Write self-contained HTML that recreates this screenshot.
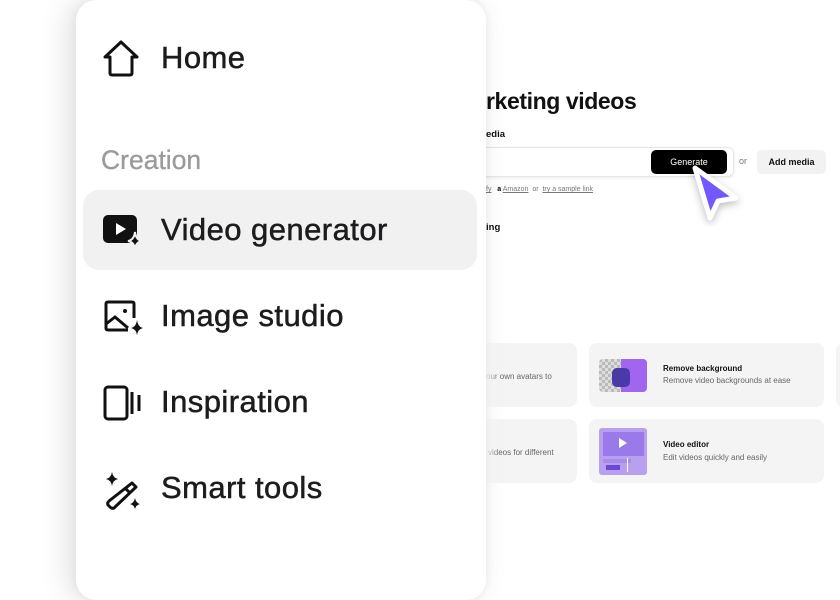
<!DOCTYPE html>
<html><head><meta charset="utf-8"><style>
*{margin:0;padding:0;box-sizing:border-box}
body{width:840px;height:560px;overflow:hidden;background:#fff;font-family:"Liberation Sans",sans-serif;position:relative;color:#111}
.a{position:absolute;white-space:nowrap}
.card{position:absolute;background:#f4f4f4;border-radius:8px}
.panel{position:absolute;left:76px;top:0;width:410px;height:600px;background:#fff;border-radius:20px;box-shadow:-8px 0 30px rgba(0,0,0,.12),0 0 10px rgba(0,0,0,.06);z-index:5}
.item{position:absolute;left:161px;font-size:31px;color:#1c1c1e;letter-spacing:0.45px;-webkit-text-stroke:0.5px #1c1c1e;z-index:6}
.z{z-index:6}
</style></head><body>
<!-- right page -->
<div class="a" style="left:486px;top:88px;font-size:23px;font-weight:bold;letter-spacing:-0.4px">rketing videos</div>
<div class="a" style="left:486px;top:129px;font-size:9.5px;font-weight:bold">edia</div>
<div class="a" style="left:486px;top:147px;width:248px;height:30px;border:1px solid #e6e6e6;border-left:none;border-radius:0 6px 6px 0;background:#fff;box-shadow:0 1px 3px rgba(0,0,0,.08)"></div>
<div class="a" style="left:651px;top:150px;width:76px;height:24px;background:#000;border-radius:5px;color:#fff;font-size:9px;text-align:center;line-height:24px">Generate</div>
<div class="a" style="left:739px;top:156px;font-size:9px;color:#777">or</div>
<div class="a" style="left:757px;top:150px;width:69px;height:24px;background:#f2f2f2;border-radius:5px;font-size:9px;text-align:center;line-height:24px;font-weight:bold">Add media</div>
<div class="a" style="left:486px;top:186px;font-size:7px;color:#777"><u>fy</u> &nbsp; <b style="color:#000">a</b> <u>Amazon</u> &nbsp;or&nbsp; <u>try a sample link</u></div>
<div class="a" style="left:486px;top:222px;font-size:9.5px;font-weight:bold">ing</div>
<div class="card" style="left:486px;top:343px;width:91px;height:64px;border-radius:0 8px 8px 0"></div>
<div class="a" style="left:486px;top:372px;font-size:8px;color:#666">our own avatars to</div>
<div class="card" style="left:589px;top:343px;width:235px;height:64px"></div>
<div class="a" style="left:599px;top:359px;width:48px;height:33px;border-radius:4px;background:repeating-conic-gradient(#ddd 0 25%,#bbb 0 50%) 0 0/6px 6px"></div>
<div class="a" style="left:621px;top:359px;width:26px;height:33px;border-radius:0 4px 4px 0;background:#a066f0"></div>
<div class="a" style="left:612px;top:368px;width:18px;height:19px;border-radius:5px;background:#4a3aa8"></div>
<div class="a" style="left:663px;top:364px;font-size:8px;font-weight:bold">Remove background</div>
<div class="a" style="left:663px;top:376px;font-size:8px;color:#666">Remove video backgrounds at ease</div>
<div class="card" style="left:836px;top:343px;width:20px;height:64px"></div>
<div class="card" style="left:486px;top:419px;width:91px;height:64px;border-radius:0 8px 8px 0"></div>
<div class="a" style="left:488px;top:448px;font-size:8px;color:#666">videos for different</div>
<div class="card" style="left:589px;top:419px;width:235px;height:64px"></div>
<div class="a" style="left:599px;top:428px;width:48px;height:47px;border-radius:3px;background:#b8a0f0"></div>
<div class="a" style="left:603px;top:432px;width:41px;height:24px;background:#9a7ae8"></div>
<div class="a" style="left:619px;top:438px;width:0;height:0;border-left:8px solid #fff;border-top:5px solid transparent;border-bottom:5px solid transparent"></div>
<div class="a" style="left:603px;top:459px;width:28px;height:4px;background:#a88ce8"></div>
<div class="a" style="left:606px;top:465px;width:14px;height:5px;background:#6a48d8"></div>
<div class="a" style="left:627px;top:458px;width:1px;height:14px;background:#fff"></div>
<div class="a" style="left:663px;top:440px;font-size:8px;font-weight:bold">Video editor</div>
<div class="a" style="left:663px;top:453px;font-size:8px;color:#666">Edit videos quickly and easily</div>
<div class="a" style="left:486px;top:335px;width:14px;height:160px;background:linear-gradient(90deg,rgba(255,255,255,.85),rgba(255,255,255,0))"></div>
<!-- cursor -->
<svg class="a" style="left:686px;top:160px" width="60" height="66" viewBox="0 0 60 66"><path d="M9 8 L50 38 L32 41 L24 58 Z" fill="#7357ff" stroke="#fff" stroke-width="5" stroke-linejoin="round" style="filter:drop-shadow(0 3px 4px rgba(0,0,0,.25))"/></svg>
<!-- panel -->
<div class="panel"></div>
<svg class="a z" style="left:102px;top:39px" width="38" height="38" viewBox="0 0 38 38" fill="none" stroke="#111" stroke-width="3" stroke-linejoin="round"><path d="M19 3 L35 18 L30 18 L30 34 Q30 36 28 36 L10 36 Q8 36 8 34 L8 18 L3 18 Z"/></svg>
<div class="item" style="top:40px">Home</div>
<div class="a z" style="left:101px;top:145px;font-size:26.5px;color:#9a9a9a;-webkit-text-stroke:0.3px #9a9a9a">Creation</div>
<div class="a z" style="left:83px;top:190px;width:394px;height:80px;background:#f1f1f1;border-radius:16px"></div>
<svg class="a z" style="left:102px;top:213px" width="42" height="36" viewBox="0 0 42 36"><rect x="1" y="2" width="34" height="28" rx="5" fill="#111"/><path d="M14 10 L24 16 L14 22 Z" fill="#fff"/><path d="M33 19 Q34 27 40 28 Q34 29 33 36 Q32 29 26 28 Q32 27 33 19Z" fill="#111" stroke="#f1f1f1" stroke-width="2"/></svg>
<div class="item" style="top:212px">Video generator</div>
<svg class="a z" style="left:102px;top:298px" width="42" height="38" viewBox="0 0 42 38" fill="none" stroke="#111" stroke-width="3"><path d="M26 32 L6 32 Q4 32 4 30 L4 6 Q4 4 6 4 L30 4 Q32 4 32 6 L32 20"/><path d="M4 26 L13 19 L26 30"/><circle cx="23" cy="13" r="2" fill="#111" stroke="none"/><path d="M35 22 Q36 29 41 30 Q36 31 35 37 Q34 31 29 30 Q34 29 35 22Z" fill="#111" stroke="none"/></svg>
<div class="item" style="top:298px">Image studio</div>
<svg class="a z" style="left:102px;top:384px" width="40" height="38" viewBox="0 0 40 38" fill="none" stroke="#111" stroke-width="3"><rect x="3" y="3" width="22" height="32" rx="3"/><path d="M30 8 L30 30 M37 11 L37 27"/></svg>
<div class="item" style="top:384px">Inspiration</div>
<svg class="a z" style="left:102px;top:470px" width="40" height="40" viewBox="0 0 40 40" fill="none" stroke="#111" stroke-width="3" stroke-linejoin="round"><path d="M30 13 L34 17 L12 38 Q10 39 8 37 L6 35 Q5 33 7 31 Z M24 19 L28 23"/><path d="M10 2 Q11 8 16 9 Q11 10 10 16 Q9 10 4 9 Q9 8 10 2Z" fill="#111" stroke="none"/><path d="M33 28 Q34 33 38 34 Q34 35 33 39 Q32 35 28 34 Q32 33 33 28Z" fill="#111" stroke="none"/></svg>
<div class="item" style="top:470px">Smart tools</div>
</body></html>
